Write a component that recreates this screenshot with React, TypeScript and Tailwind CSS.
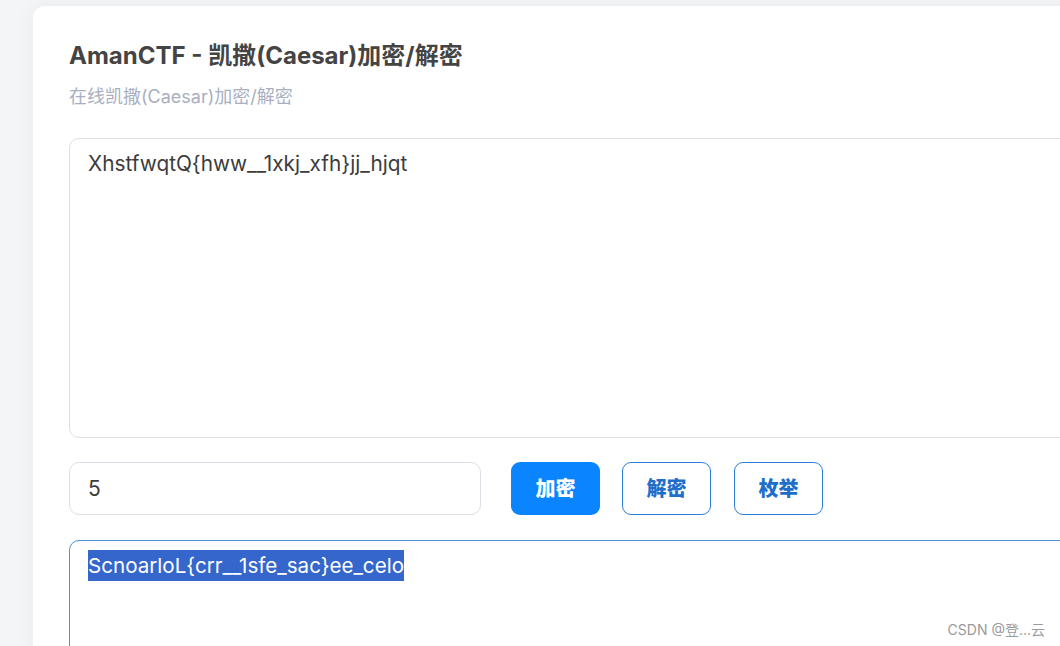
import React from 'react';

const font = { fontFamily: 'Inter, "Noto Sans CJK SC", sans-serif' };

export default function App() {
  return (
    <div className="relative h-[646px] w-[1060px] overflow-hidden bg-[#f4f5f7]" style={font}>
      <div className="ml-[33px] mt-[6px] w-[1100px] h-[700px] rounded-[12px] bg-white shadow-[0_0_20px_rgba(0,0,0,0.05)] pl-[36px] pt-[34px]">
        <h1 className="text-[24px] leading-[32px] font-bold text-[#444]">AmanCTF - 凯撒(Caesar)加密/解密</h1>
        <p className="mt-[12px] text-[18px] leading-[26px] text-[#a9afc0]">在线凯撒(Caesar)加密/解密</p>

        <textarea
          readOnly
          defaultValue="XhstfwqtQ{hww__1xkj_xfh}jj_hjqt"
          className="mt-[28px] block h-[300px] w-[1020px] resize-none rounded-[10px] border border-[#dcdfe6] px-[18px] py-[10px] text-[20.8px] leading-[30px] text-[#3c3c3c] outline-none"
        />

        <div className="mt-[24px] flex items-center">
          <input
            readOnly
            defaultValue="5"
            className="h-[53px] w-[412px] rounded-[10px] border border-[#dcdfe6] px-[18px] text-[21px] text-[#3c3c3c] outline-none"
          />
          <button className="ml-[30px] h-[53px] w-[89px] rounded-[9px] bg-[#0a84ff] text-[20px] font-black text-white">加密</button>
          <button className="ml-[22px] h-[53px] w-[89px] rounded-[9px] border border-[#2b7fd6] bg-white text-[20px] font-black text-[#1f6fc9]">解密</button>
          <button className="ml-[23px] h-[53px] w-[89px] rounded-[9px] border border-[#2b7fd6] bg-white text-[20px] font-black text-[#1f6fc9]">枚举</button>
        </div>

        <div className="mt-[25px] h-[200px] w-[1020px] rounded-[10px] border border-[#4a94dc] px-[18px] pt-[9px] text-[20.6px] leading-[31px] text-[#333]">
          <span className="inline-block bg-[#3566cc] leading-[31px] text-white">ScnoarloL{'{'}crr__1sfe_sac{'}'}ee_celo</span>
        </div>
      </div>

      <div className="absolute right-[15px] top-[620px] text-[14px] leading-[20px] text-[#9a9a9a]">CSDN @登...云</div>
    </div>
  );
}
